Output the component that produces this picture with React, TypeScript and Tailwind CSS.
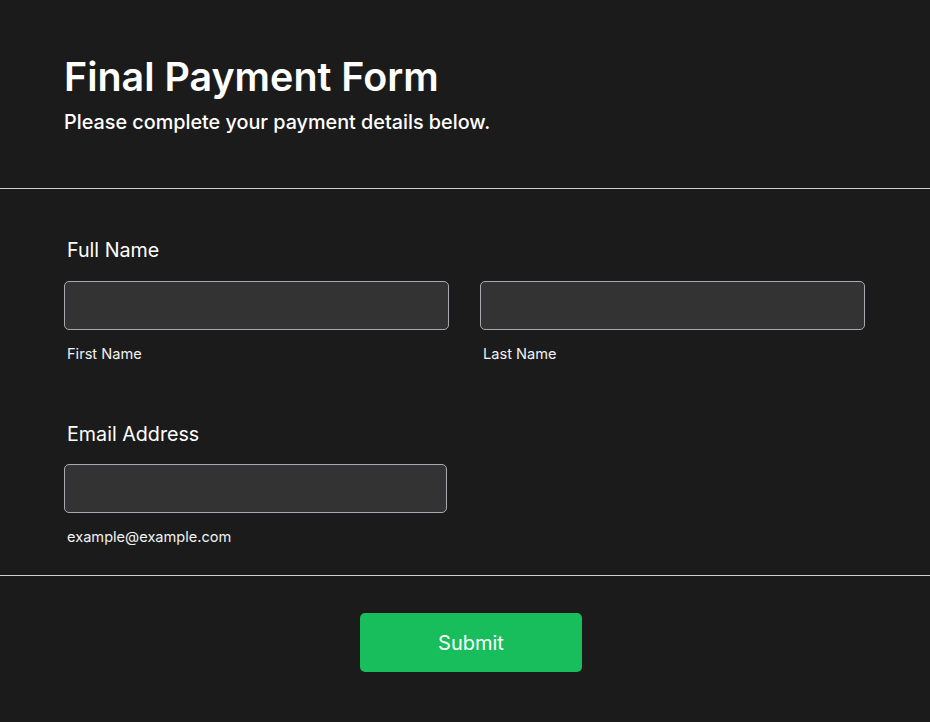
const font = { fontFamily: "Inter, 'Noto Sans', sans-serif" };

function Field({ hint, className }: { hint: string; className?: string }) {
  return (
    <div className={className}>
      <input
        type="text"
        className="block w-full h-[49px] rounded-[5px] border border-[#a9a9b0] bg-[#333333] px-3 text-white outline-none"
      />
      <div className="mt-[14px] pl-[3px] text-[14.6px] leading-[20px] text-[#f2f2f2]">{hint}</div>
    </div>
  );
}

export default function App() {
  return (
    <div className="min-h-screen w-full bg-[#1b1b1b] text-white" style={font}>
      {/* Header */}
      <header className="border-b border-[#cfcfd4] px-[64px] pt-[53px] pb-[52px]">
        <h1 className="text-[39.4px] leading-[48px] font-semibold">Final Payment Form</h1>
        <p className="mt-[7px] text-[19.8px] leading-[28px] font-medium">
          Please complete your payment details below.
        </p>
      </header>

      {/* Form body */}
      <section className="border-b border-[#cfcfd4] px-[64px] pt-[49px] pb-[28px]">
        <label className="block pl-[3px] text-[19.7px] leading-[24px] font-normal">Full Name</label>
        <div className="mt-[19px] grid grid-cols-2 gap-[31px] w-[801px]">
          <Field hint="First Name" />
          <Field hint="Last Name" />
        </div>

        <label className="mt-[58px] block pl-[3px] text-[19.7px] leading-[24px] font-normal">
          Email Address
        </label>
        <Field hint="example@example.com" className="mt-[18px] w-[383px]" />
      </section>

      {/* Footer */}
      <div className="flex justify-center pl-[12px] pt-[37px] pb-[50px]">
        <button className="h-[59px] w-[222px] rounded-[5px] bg-[#18be5c] text-[20px] font-normal text-white">
          Submit
        </button>
      </div>
    </div>
  );
}
